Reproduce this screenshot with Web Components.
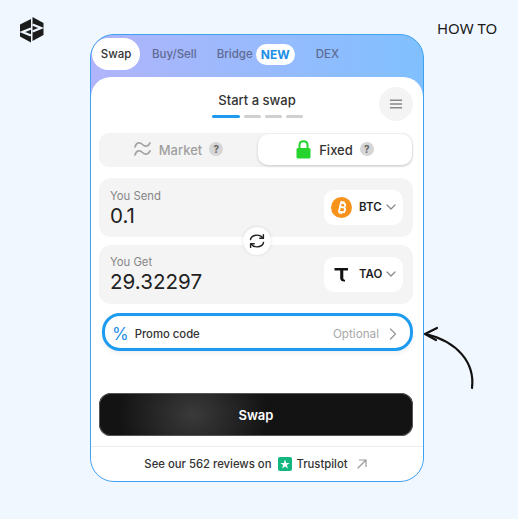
<!DOCTYPE html>
<html>
<head>
<meta charset="utf-8">
<title>Swap</title>
<style>
  html, body { margin: 0; padding: 0; }
  body { background: #f0f7ff; font-family: Inter, "Liberation Sans", sans-serif; color: #222; }
</style>
</head>
<body>
<swap-page></swap-page>
<script>
class SwapPage extends HTMLElement {
  connectedCallback() {
    this.attachShadow({ mode: 'open' });
    this.shadowRoot.innerHTML = `
      <style>
        :host { display: grid; grid-template-columns: 90px 334px 94px; width: 518px; height: 519px; position: relative; overflow: hidden; }
        .logo { margin: 17px 0 0 20px; width: 24px; height: 26px; display: block; }
        .how { margin: 19px 0 0 13px; font: 400 15px/18px "Noto Sans", sans-serif; color: #1a1a1a; white-space: nowrap; }
        swap-card { margin-top: 34px; }
        .arrow { position: absolute; left: 420px; top: 325px; }
      </style>
      <svg class="logo" viewBox="0 0 24 26">
        <path fill="#1c1c1c" d="M11 2V25.5L0 19.5V7.5Z"/>
        <path fill="#1c1c1c" d="M12.5 0L23.5 6V18L12.5 24Z"/>
        <path fill="none" stroke="#f0f7ff" stroke-width="2.4" d="M11 11.5L2.5 15L11 18.500"/>
        <path fill="none" stroke="#f0f7ff" stroke-width="2.4" d="M12.5 7.5L21 11L12.5 14.5"/>
      </svg>
      <swap-card></swap-card>
      <div class="how">HOW TO</div>
      <svg class="arrow" width="60" height="70" viewBox="0 0 60 70" fill="none" stroke="#111" stroke-width="2.2" stroke-linecap="round" stroke-linejoin="round">
        <path d="M52 63 C55 38 38 17 6 9"/>
        <path d="M17 3 L5 9 L16 15"/>
      </svg>
    `;
  }
}

class SwapCard extends HTMLElement {
  connectedCallback() {
    this.attachShadow({ mode: 'open' });
    this.shadowRoot.innerHTML = `
      <style>
        :host { display: flex; flex-direction: column; height: 448px; box-sizing: border-box; border: 1px solid #3ea2f2; border-radius: 24px; overflow: hidden; background: linear-gradient(90deg, #b1b4fb, #80c0ff); }
        .panel { flex: 1; display: flex; flex-direction: column; background: #fff; border-radius: 20px 20px 0 0; margin-top: -1px; padding: 0 10px 0 8px; min-height: 0; }
        .head { position: relative; height: 56px; display: flex; flex-direction: column; align-items: center; padding-top: 15px; box-sizing: border-box; margin-right: -2px; }
        .title { font-size: 13px; line-height: 17px; font-weight: 500; color: #333; }
        .steps { display: flex; gap: 4px; margin-top: 6px; }
        .steps i { display: block; width: 17px; height: 3px; border-radius: 2px; background: #d0d0d0; }
        .steps i:first-child { width: 28px; background: #1d9bf0; }
        .menu { position: absolute; right: 2px; top: 10px; width: 34px; height: 34px; border-radius: 50%; background: #f4f4f4; display: flex; align-items: center; justify-content: center; }
        .fields { position: relative; display: flex; flex-direction: column; gap: 8px; margin-top: 11px; }
        .flip { position: absolute; left: 144px; top: 49px; width: 28px; height: 28px; border-radius: 50%; background: #fff; box-shadow: 0 0 3px rgba(0,0,0,.15); display: flex; align-items: center; justify-content: center; }
        promo-row { margin: 9px 0 0 3px; width: 311px; }
        .cta { margin-top: 42px; width: 314px; height: 43px; border-radius: 12px; background: radial-gradient(ellipse 75px 60px at 94px 50%, #3a3a3a, #131313); box-shadow: inset 0 0 0 1px #555; display: flex; align-items: center; justify-content: center; color: #fff; font-size: 13px; font-weight: 600; }
        trust-footer { margin: 10px -10px 0 -8px; }
      </style>
      <tab-bar></tab-bar>
      <div class="panel">
        <div class="head">
          <div class="title">Start a swap</div>
          <div class="steps"><i></i><i></i><i></i><i></i></div>
          <div class="menu">
            <svg width="12" height="10" viewBox="0 0 12 10" fill="none" stroke="#888" stroke-width="1.4"><path d="M0 1.2H12M0 5H12M0 8.8H12"/></svg>
          </div>
        </div>
        <swap-mode></swap-mode>
        <div class="fields">
          <amount-box label="You Send" value="0.1" ticker="BTC" nudge="4">
            <svg slot="icon" width="21" height="21" viewBox="0 0 21 21">
              <circle cx="10.5" cy="10.5" r="10.5" fill="#f7931a"/>
              <path fill="none" stroke="#fff" stroke-width="1.8" transform="rotate(12 10.5 10.5)" d="M8 5.8H11.8C14.4 5.8 14.4 10 11.8 10H8M8 10H12.4C15.2 10 15.2 14.8 12.4 14.8H8M8.9 5.8V14.8M9.6 4V5.8M11.6 4V5.8M9.6 14.8V16.8M11.6 14.8V16.8"/>
            </svg>
          </amount-box>
          <amount-box label="You Get" value="29.32297" ticker="TAO" nudge="2">
            <svg slot="icon" width="21" height="21" viewBox="0 0 21 21">
              <path fill="#111" d="M3.5 4H17V6.4H12.3V14C12.3 15.2 12.9 15.8 14 15.8V17.5C11 17.7 9.2 16.5 9.2 14V6.4H3.5Z"/>
            </svg>
          </amount-box>
          <div class="flip">
            <svg width="16" height="16" viewBox="0 0 16 16" fill="none" stroke="#222" stroke-width="1.4" stroke-linecap="round" stroke-linejoin="round">
              <path d="M1.5 6.5C2.5 1.5 10.5 0.5 14 5"/><path d="M14.4 1.6V5.2H10.8"/>
              <path d="M14.5 9.5C13.5 14.5 5.5 15.5 2 11"/><path d="M1.6 14.4V10.8H5.2"/>
            </svg>
          </div>
        </div>
        <promo-row></promo-row>
        <div class="cta">Swap</div>
        <trust-footer></trust-footer>
      </div>
    `;
  }
}

class TabBar extends HTMLElement {
  connectedCallback() {
    this.attachShadow({ mode: 'open' });
    this.shadowRoot.innerHTML = `
      <style>
        :host { display: flex; align-items: center; height: 43px; padding: 3px 0 8px 1px; box-sizing: border-box; font-size: 11.5px; font-weight: 500; color: #5e6a92; flex: none; }
        span { white-space: nowrap; }
        .active { background: #fff; color: #333; border-radius: 16px; height: 32px; width: 48px; display: flex; align-items: center; justify-content: center; }
        .buy { margin-left: 12px; }
        .bridge { margin-left: 20px; }
        .new { margin-left: 3px; background: #fff; color: #1d8fe6; font-weight: 700; border-radius: 11px; height: 21px; width: 39px; display: flex; align-items: center; justify-content: center; font-size: 12px; }
        .dex { margin-left: 21px; }
      </style>
      <span class="active">Swap</span>
      <span class="buy">Buy/Sell</span>
      <span class="bridge">Bridge</span>
      <span class="new">NEW</span>
      <span class="dex">DEX</span>
    `;
  }
}

class SwapMode extends HTMLElement {
  connectedCallback() {
    this.attachShadow({ mode: 'open' });
    this.shadowRoot.innerHTML = `
      <style>
        :host { display: grid; grid-template-columns: 157px 154px; height: 34px; padding: 1px 1px 2px 2px; box-sizing: border-box; background: #f4f4f4; border-radius: 10px; width: 314px; }
        div { display: flex; align-items: center; justify-content: center; gap: 7px; font-size: 13px; font-weight: 500; border-radius: 10px; }
        span { padding-top: 1px; }
        .market { color: #a0a0a0; padding-right: 2px; }
        .fixed { background: #fff; color: #333; box-shadow: 0 1px 3px rgba(0,0,0,.18); }
        b { width: 14px; height: 14px; border-radius: 50%; background: #d6d6d6; color: #666; font-size: 10px; font-weight: 700; line-height: 14px; text-align: center; }
        svg { margin-right: 1px; }
      </style>
      <div class="market">
        <svg width="17" height="16" viewBox="0 0 17 16" fill="none" stroke="#a4a4a4" stroke-width="1.7" stroke-linecap="round">
          <path d="M1 6C2.5 1 6 1 8.5 3.5S14 6 16 2"/><path d="M1 14C2.5 9 6 9 8.5 11.5S14 14 16 10"/>
        </svg>
        <span>Market</span><b>?</b>
      </div>
      <div class="fixed">
        <svg width="15" height="19" viewBox="0 0 15 19">
          <path fill="none" stroke="#27d32d" stroke-width="2" d="M3.5 9V5C3.500 0 11.500 0 11.500 5V9"/>
          <rect x="0.5" y="8" width="14" height="10.5" rx="1.5" fill="#27d32d"/>
        </svg>
        <span>Fixed</span><b>?</b>
      </div>
    `;
  }
}

class AmountBox extends HTMLElement {
  connectedCallback() {
    const nudge = this.getAttribute('nudge') || 0;
    this.attachShadow({ mode: 'open' });
    this.shadowRoot.innerHTML = `
      <style>
        :host { display: flex; align-items: center; justify-content: space-between; height: 59px; width: 314px; box-sizing: border-box; background: #f4f4f4; border-radius: 12px; padding: 0 10px 0 11px; }
        .text { padding-top: ${nudge}px; }
        .label { font-size: 11.3px; line-height: 14px; color: #858585; }
        .value { font-size: 20.6px; line-height: 26px; color: #222; }
        .picker { display: flex; align-items: center; width: 79px; height: 35px; box-sizing: border-box; padding-left: 7px; background: #fff; border-radius: 10px; }
        .ticker { margin-left: 7px; font-size: 11.5px; font-weight: 600; color: #1e1e1e; }
        svg.chev { margin-left: 4px; }
      </style>
      <div class="text">
        <div class="label">${this.getAttribute('label')}</div>
        <div class="value">${this.getAttribute('value')}</div>
      </div>
      <div class="picker">
        <slot name="icon"></slot>
        <span class="ticker">${this.getAttribute('ticker')}</span>
        <svg class="chev" width="10" height="6" viewBox="0 0 10 6" fill="none" stroke="#888" stroke-width="1.2" stroke-linecap="round" stroke-linejoin="round"><path d="M1 1L5 5L9 1"/></svg>
      </div>
    `;
  }
}

class PromoRow extends HTMLElement {
  connectedCallback() {
    this.attachShadow({ mode: 'open' });
    this.shadowRoot.innerHTML = `
      <style>
        :host { display: flex; align-items: center; height: 39px; box-sizing: border-box; border: 3px solid #1d9bf0; border-radius: 18px; padding: 3px 13px 0 7px; box-shadow: 0 2px 5px rgba(0,0,0,.07); font-size: 11.3px; font-weight: 500; color: #333; }
        .pct { font-size: 17px; line-height: 20px; font-weight: 400; color: #1d8fe6; margin-right: 6px; }
        .opt { margin-left: auto; color: #a8a8a8; font-weight: 400; font-size: 11.7px; }
        svg { margin-left: 10px; }
      </style>
      <span class="pct">%</span>
      <span>Promo code</span>
      <span class="opt">Optional</span>
      <svg width="8" height="12" viewBox="0 0 8 12" fill="none" stroke="#999" stroke-width="1.3" stroke-linecap="round" stroke-linejoin="round"><path d="M1.5 1L6.5 6L1.5 11"/></svg>
    `;
  }
}

class TrustFooter extends HTMLElement {
  connectedCallback() {
    this.attachShadow({ mode: 'open' });
    this.shadowRoot.innerHTML = `
      <style>
        :host { display: flex; align-items: center; justify-content: center; height: 34px; border-top: 1px solid #ececec; padding-right: 3px; font-size: 11.3px; font-weight: 500; color: #333; }
        .star { margin: 0 4px 0 7px; width: 14px; height: 14px; border-radius: 2px; background: #12b77f; display: block; }
        .go { margin-left: 9px; }
      </style>
      <span>See our 562 reviews on</span>
      <svg class="star" viewBox="0 0 14 14"><path fill="#fff" d="M7 2.5L8.2 5.9H11.7L8.9 8L9.9 11.4L7 9.4L4.1 11.4L5.1 8L2.3 5.9H5.8Z"/></svg>
      <span>Trustpilot</span>
      <svg class="go" width="10" height="10" viewBox="0 0 10 10" fill="none" stroke="#999" stroke-width="1.2" stroke-linecap="round" stroke-linejoin="round"><path d="M1 9L9 1M2.5 1H9V7.5"/></svg>
    `;
  }
}

customElements.define('swap-page', SwapPage);
customElements.define('swap-card', SwapCard);
customElements.define('tab-bar', TabBar);
customElements.define('swap-mode', SwapMode);
customElements.define('amount-box', AmountBox);
customElements.define('promo-row', PromoRow);
customElements.define('trust-footer', TrustFooter);
</script>
</body>
</html>
